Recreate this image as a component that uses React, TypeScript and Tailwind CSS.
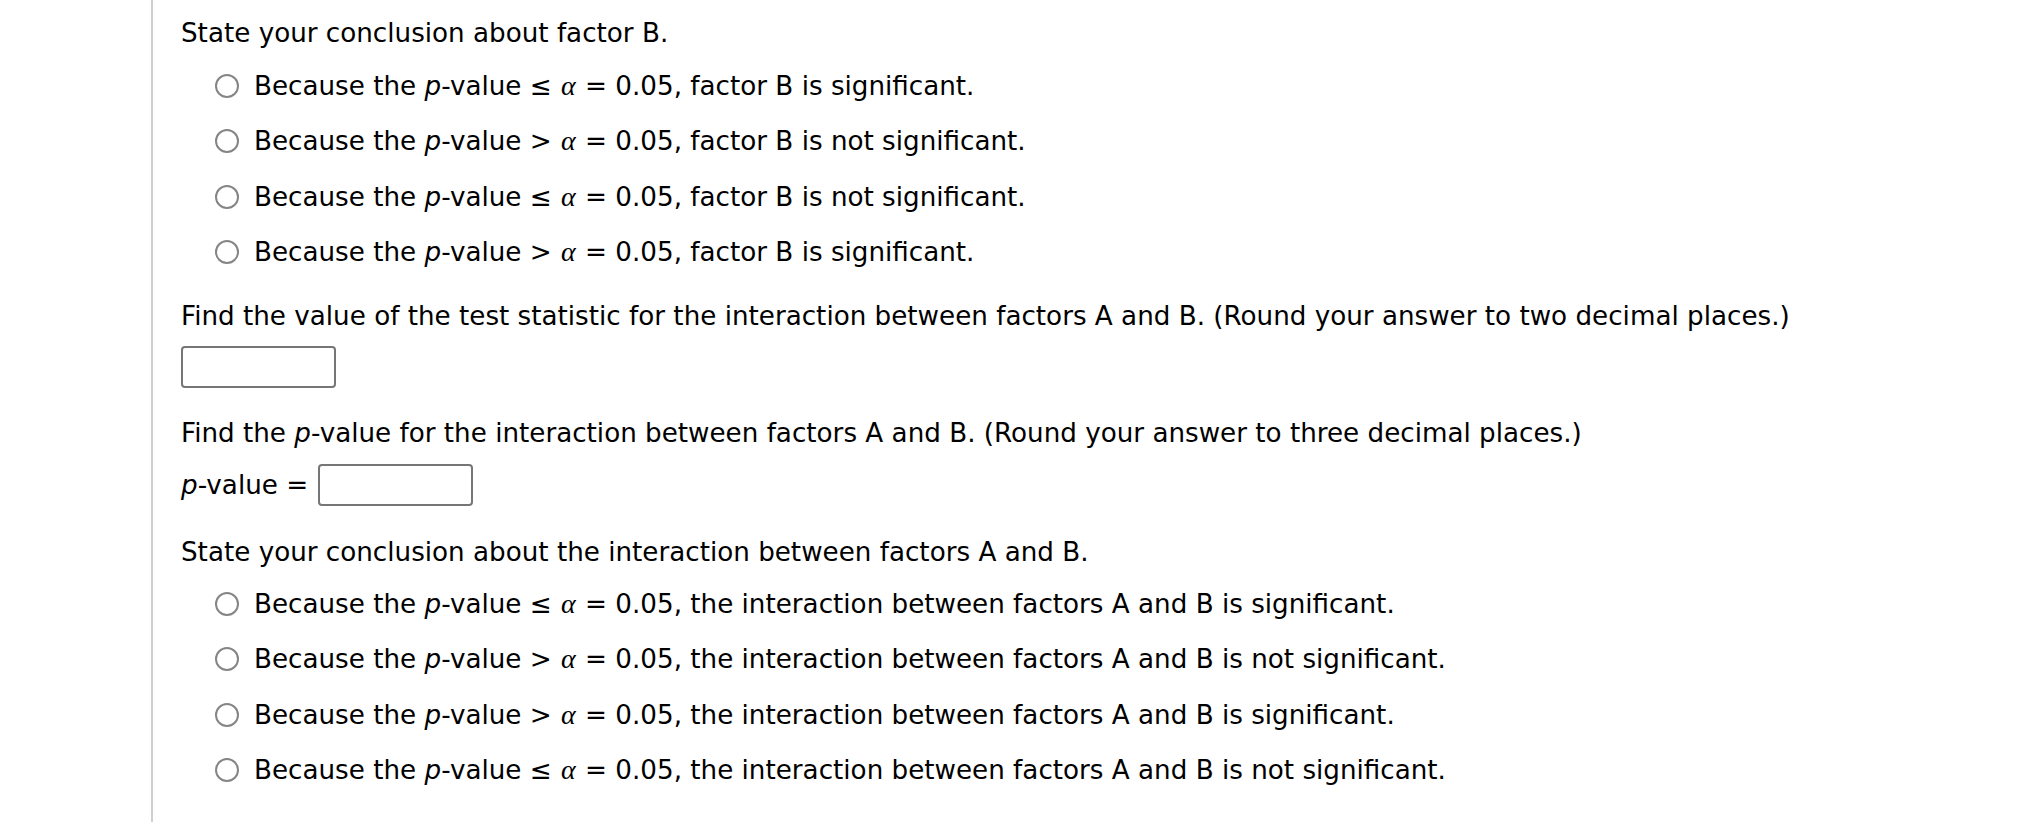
const P = () => <i className="italic">p</i>;
const Alpha = () => <i className="mx-[1px] italic font-['Liberation_Serif',serif] text-[28px]">α</i>;

type Opt = { op: string; rest: string };

function Radio({ op, rest }: Opt) {
  return (
    <label className="flex h-[55.5px] items-center pl-[34px]">
      <span className="h-[24px] w-[24px] shrink-0 rounded-full border-2 border-[#858585] bg-white" />
      <span className="ml-[15px] whitespace-nowrap">
        Because the <P />-value {op} <Alpha /> = 0.05, {rest}
      </span>
    </label>
  );
}

function Box() {
  return <div className="h-[42px] w-[155px] rounded-[4px] border-2 border-[#767676] bg-white" />;
}

export default function App() {
  const factorB: Opt[] = [
    { op: '≤', rest: 'factor B is significant.' },
    { op: '>', rest: 'factor B is not significant.' },
    { op: '≤', rest: 'factor B is not significant.' },
    { op: '>', rest: 'factor B is significant.' },
  ];
  const inter: Opt[] = [
    { op: '≤', rest: 'the interaction between factors A and B is significant.' },
    { op: '>', rest: 'the interaction between factors A and B is not significant.' },
    { op: '>', rest: 'the interaction between factors A and B is significant.' },
    { op: '≤', rest: 'the interaction between factors A and B is not significant.' },
  ];

  return (
    <div className="h-[822px] w-[2040px] overflow-hidden bg-white font-['DejaVu_Sans',Verdana,sans-serif] text-[26.2px] leading-none text-black">
      <div className="ml-[151px] h-full border-l-2 border-[#cfcfcf] pl-[28px] pt-[8px]">
        <div className="flex h-[50px] items-center">State your conclusion about factor B.</div>
        {factorB.map((o, i) => (
          <Radio key={i} {...o} />
        ))}

        <div className="mt-[16px] flex h-[40px] items-center">
          Find the value of the test statistic for the interaction between factors A and B. (Round your answer to two decimal places.)
        </div>
        <div className="mt-[10px]">
          <Box />
        </div>

        <div className="mt-[25px] flex h-[40px] items-center">
          <span>
            Find the <P />-value for the interaction between factors A and B. (Round your answer to three decimal places.)
          </span>
        </div>
        <div className="mt-[11px] flex items-center">
          <span>
            <P />-value =
          </span>
          <div className="ml-[10px]">
            <Box />
          </div>
        </div>

        <div className="mt-[22px] flex h-[48px] items-center">State your conclusion about the interaction between factors A and B.</div>
        {inter.map((o, i) => (
          <Radio key={i} {...o} />
        ))}
      </div>
    </div>
  );
}
